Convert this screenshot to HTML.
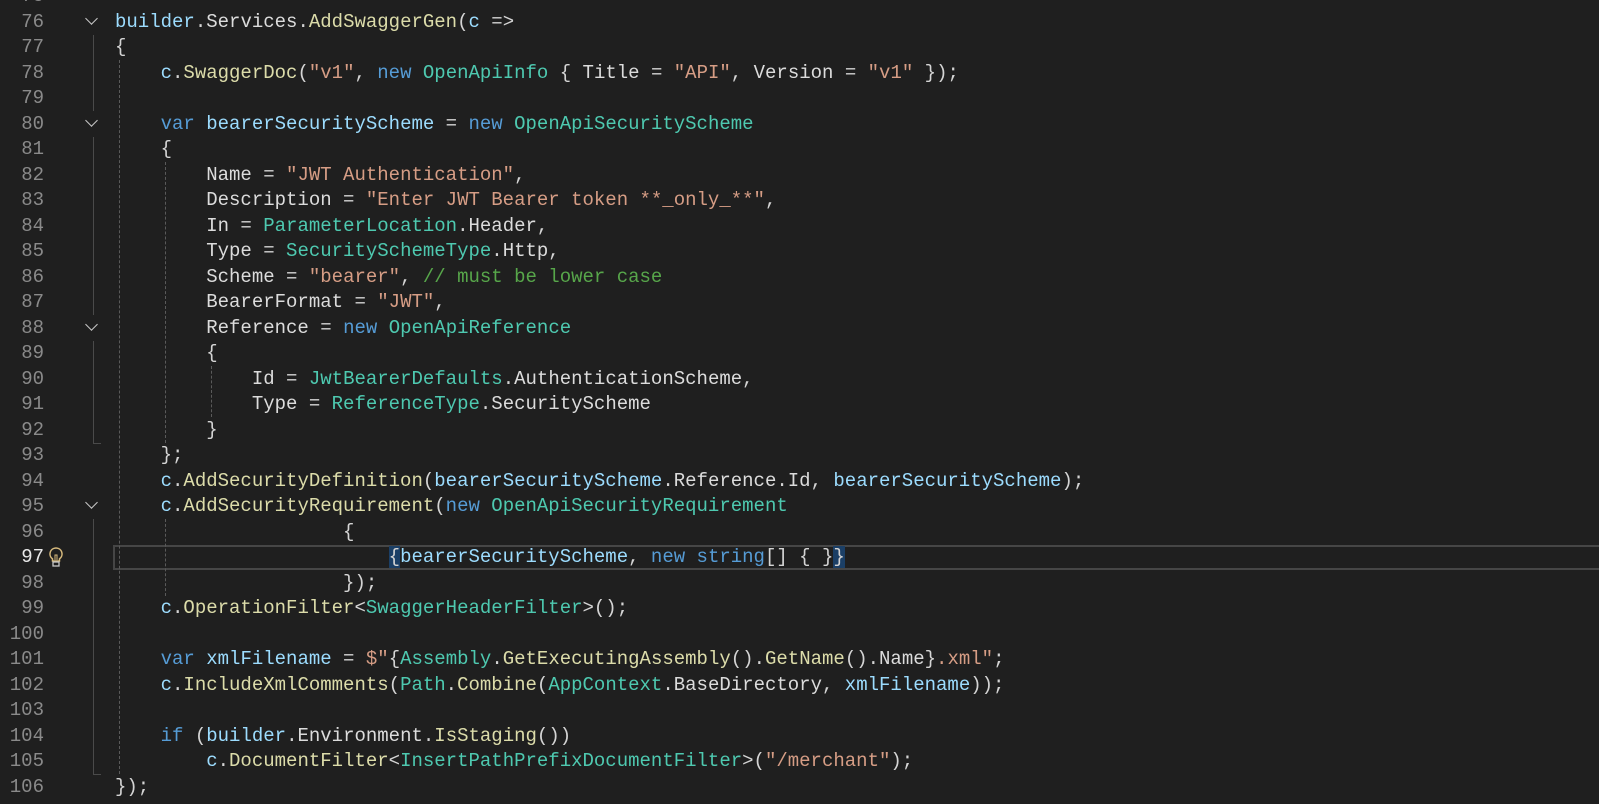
<!DOCTYPE html>
<html><head><meta charset="utf-8"><style>
body{margin:0;width:1599px;height:804px;background:#1f1f1f;overflow:hidden;position:relative;font-family:"Liberation Mono",monospace;font-size:19px}
#code{position:absolute;left:0;top:-16px}
.l{position:relative;height:25.5px;line-height:25.5px;width:1599px;white-space:pre}
.n{position:absolute;left:0;width:44px;text-align:right;color:#8a8a8a}
.c{position:absolute;left:115px;color:#d4d4d4}
.v{color:#9cdcfe}.m{color:#dcdcaa}.k{color:#569cd6}.t{color:#4ec9b0}.s{color:#d69d85}.g{color:#57a64a}.w{color:#dcdcdc}
.ch{position:absolute;left:87px;width:8px;height:8px;border-right:1.5px solid #c8c8c8;border-bottom:1.5px solid #c8c8c8;transform:rotate(45deg)}
.fl{position:absolute;left:93px;width:1px;background:#4a4a4a}
.dg{position:absolute;width:0;border-left:1px dashed #5a5a5a}
</style></head><body>
<div style="position:absolute;left:113px;top:545px;width:1490px;height:21px;border:2px solid #464646;border-right:none"></div>
<div class="dg" style="left:119px;top:60px;height:714px"></div>
<div class="dg" style="left:165px;top:162px;height:281px"></div>
<div class="dg" style="left:211px;top:366px;height:51px"></div>
<div class="dg" style="left:165px;top:519px;height:77px"></div>
<div class="fl" style="top:35px;height:76px"></div>
<div class="fl" style="top:137px;height:178px"></div>
<div class="fl" style="top:341px;height:102px"></div>
<div class="fl" style="top:519px;height:255px"></div>
<div style="position:absolute;left:93px;top:443px;width:8px;height:1px;background:#4a4a4a"></div>
<div style="position:absolute;left:93px;top:774px;width:8px;height:1px;background:#4a4a4a"></div>
<div class="ch" style="top:14px"></div>
<div class="ch" style="top:116px"></div>
<div class="ch" style="top:320px"></div>
<div class="ch" style="top:498px"></div>
<svg style="position:absolute;left:47px;top:546px" width="18" height="22" viewBox="0 0 18 22"><path d="M9 2a6 6 0 0 0-3.5 10.9V15h7v-2.1A6 6 0 0 0 9 2z" fill="none" stroke="#d7ba7d" stroke-width="1.5"/><rect x="6" y="16" width="6" height="4" fill="none" stroke="#c8c8c8" stroke-width="1.3"/><path d="M8 14V9h2v5" fill="none" stroke="#d7ba7d" stroke-width="1"/></svg>
<div id="code">
<div class="l"><span class="n">75</span></div>
<div class="l"><span class="n">76</span><span class="c"><span class="v">builder</span>.<span class="w">Services</span>.<span class="m">AddSwaggerGen</span>(<span class="v">c</span> =&gt;</span></div>
<div class="l"><span class="n">77</span><span class="c">{</span></div>
<div class="l"><span class="n">78</span><span class="c">    <span class="v">c</span>.<span class="m">SwaggerDoc</span>(<span class="s">"v1"</span>, <span class="k">new</span> <span class="t">OpenApiInfo</span> { <span class="w">Title</span> = <span class="s">"API"</span>, <span class="w">Version</span> = <span class="s">"v1"</span> });</span></div>
<div class="l"><span class="n">79</span></div>
<div class="l"><span class="n">80</span><span class="c">    <span class="k">var</span> <span class="v">bearerSecurityScheme</span> = <span class="k">new</span> <span class="t">OpenApiSecurityScheme</span></span></div>
<div class="l"><span class="n">81</span><span class="c">    {</span></div>
<div class="l"><span class="n">82</span><span class="c">        <span class="w">Name</span> = <span class="s">"JWT Authentication"</span>,</span></div>
<div class="l"><span class="n">83</span><span class="c">        <span class="w">Description</span> = <span class="s">"Enter JWT Bearer token **_only_**"</span>,</span></div>
<div class="l"><span class="n">84</span><span class="c">        <span class="w">In</span> = <span class="t">ParameterLocation</span>.<span class="w">Header</span>,</span></div>
<div class="l"><span class="n">85</span><span class="c">        <span class="w">Type</span> = <span class="t">SecuritySchemeType</span>.<span class="w">Http</span>,</span></div>
<div class="l"><span class="n">86</span><span class="c">        <span class="w">Scheme</span> = <span class="s">"bearer"</span>, <span class="g">// must be lower case</span></span></div>
<div class="l"><span class="n">87</span><span class="c">        <span class="w">BearerFormat</span> = <span class="s">"JWT"</span>,</span></div>
<div class="l"><span class="n">88</span><span class="c">        <span class="w">Reference</span> = <span class="k">new</span> <span class="t">OpenApiReference</span></span></div>
<div class="l"><span class="n">89</span><span class="c">        {</span></div>
<div class="l"><span class="n">90</span><span class="c">            <span class="w">Id</span> = <span class="t">JwtBearerDefaults</span>.<span class="w">AuthenticationScheme</span>,</span></div>
<div class="l"><span class="n">91</span><span class="c">            <span class="w">Type</span> = <span class="t">ReferenceType</span>.<span class="w">SecurityScheme</span></span></div>
<div class="l"><span class="n">92</span><span class="c">        }</span></div>
<div class="l"><span class="n">93</span><span class="c">    };</span></div>
<div class="l"><span class="n">94</span><span class="c">    <span class="v">c</span>.<span class="m">AddSecurityDefinition</span>(<span class="v">bearerSecurityScheme</span>.<span class="w">Reference</span>.<span class="w">Id</span>, <span class="v">bearerSecurityScheme</span>);</span></div>
<div class="l"><span class="n">95</span><span class="c">    <span class="v">c</span>.<span class="m">AddSecurityRequirement</span>(<span class="k">new</span> <span class="t">OpenApiSecurityRequirement</span></span></div>
<div class="l"><span class="n">96</span><span class="c">                    {</span></div>
<div class="l"><span class="n" style="color:#e8e8e8">97</span><span class="c">                        <span style="background:#1b3f66">{</span><span class="v">bearerSecurityScheme</span>, <span class="k">new</span> <span class="k">string</span>[] { }<span style="background:#1b3f66">}</span></span></div>
<div class="l"><span class="n">98</span><span class="c">                    });</span></div>
<div class="l"><span class="n">99</span><span class="c">    <span class="v">c</span>.<span class="m">OperationFilter</span>&lt;<span class="t">SwaggerHeaderFilter</span>&gt;();</span></div>
<div class="l"><span class="n">100</span></div>
<div class="l"><span class="n">101</span><span class="c">    <span class="k">var</span> <span class="v">xmlFilename</span> = <span class="s">$"</span>{<span class="t">Assembly</span>.<span class="m">GetExecutingAssembly</span>().<span class="m">GetName</span>().<span class="w">Name</span>}<span class="s">.xml"</span>;</span></div>
<div class="l"><span class="n">102</span><span class="c">    <span class="v">c</span>.<span class="m">IncludeXmlComments</span>(<span class="t">Path</span>.<span class="m">Combine</span>(<span class="t">AppContext</span>.<span class="w">BaseDirectory</span>, <span class="v">xmlFilename</span>));</span></div>
<div class="l"><span class="n">103</span></div>
<div class="l"><span class="n">104</span><span class="c">    <span class="k">if</span> (<span class="v">builder</span>.<span class="w">Environment</span>.<span class="m">IsStaging</span>())</span></div>
<div class="l"><span class="n">105</span><span class="c">        <span class="v">c</span>.<span class="m">DocumentFilter</span>&lt;<span class="t">InsertPathPrefixDocumentFilter</span>&gt;(<span class="s">"/merchant"</span>);</span></div>
<div class="l"><span class="n">106</span><span class="c">});</span></div>
</div>
</body></html>
